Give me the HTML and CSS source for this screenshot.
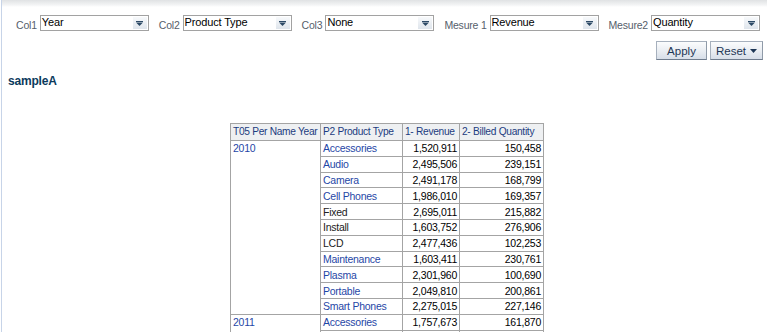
FILE: index.html
```html
<!DOCTYPE html>
<html>
<head>
<meta charset="utf-8">
<link rel="stylesheet" href="styles.css">
</head>
<body>
<div class="page">
  <div class="topbar"></div>
  <div class="prompts">
    <div class="prompt"><span class="plabel">Col1</span><div class="sel"><span class="sel-text">Year</span><span class="sel-btn"><svg width="7" height="5" viewBox="0 0 7 5"><rect x="0" y="0" width="7" height="1" fill="#2d4a66"/><path d="M0 1.5H7L3.5 5Z" fill="#2d4a66"/></svg></span></div></div>
    <div class="prompt"><span class="plabel">Col2</span><div class="sel"><span class="sel-text">Product Type</span><span class="sel-btn"><svg width="7" height="5" viewBox="0 0 7 5"><rect x="0" y="0" width="7" height="1" fill="#2d4a66"/><path d="M0 1.5H7L3.5 5Z" fill="#2d4a66"/></svg></span></div></div>
    <div class="prompt"><span class="plabel">Col3</span><div class="sel"><span class="sel-text">None</span><span class="sel-btn"><svg width="7" height="5" viewBox="0 0 7 5"><rect x="0" y="0" width="7" height="1" fill="#2d4a66"/><path d="M0 1.5H7L3.5 5Z" fill="#2d4a66"/></svg></span></div></div>
    <div class="prompt"><span class="plabel">Mesure 1</span><div class="sel"><span class="sel-text">Revenue</span><span class="sel-btn"><svg width="7" height="5" viewBox="0 0 7 5"><rect x="0" y="0" width="7" height="1" fill="#2d4a66"/><path d="M0 1.5H7L3.5 5Z" fill="#2d4a66"/></svg></span></div></div>
    <div class="prompt"><span class="plabel">Mesure2</span><div class="sel"><span class="sel-text">Quantity</span><span class="sel-btn"><svg width="7" height="5" viewBox="0 0 7 5"><rect x="0" y="0" width="7" height="1" fill="#2d4a66"/><path d="M0 1.5H7L3.5 5Z" fill="#2d4a66"/></svg></span></div></div>
  </div>
  <div class="actions">
    <button class="btn btn-apply">Apply</button>
    <button class="btn btn-reset">Reset <svg width="7" height="4" viewBox="0 0 7 4"><path d="M0 0H7L3.5 4Z" fill="#1d3655"/></svg></button>
  </div>
  <h2 class="title">sampleA</h2>
  <div class="table-wrap">
    <table class="pivot">
      <colgroup><col class="c1"><col class="c2"><col class="c3"><col class="c4"></colgroup>
      <thead>
        <tr><th>T05 Per Name Year</th><th>P2 Product Type</th><th>1- Revenue</th><th>2- Billed Quantity</th></tr>
      </thead>
      <tbody>
        <tr><td class="lnk year" rowspan="11">2010</td><td class="lnk">Accessories</td><td class="num">1,520,911</td><td class="num">150,458</td></tr>
        <tr><td class="lnk">Audio</td><td class="num">2,495,506</td><td class="num">239,151</td></tr>
        <tr><td class="lnk">Camera</td><td class="num">2,491,178</td><td class="num">168,799</td></tr>
        <tr><td class="lnk">Cell Phones</td><td class="num">1,986,010</td><td class="num">169,357</td></tr>
        <tr><td class="txt">Fixed</td><td class="num">2,695,011</td><td class="num">215,882</td></tr>
        <tr><td class="txt">Install</td><td class="num">1,603,752</td><td class="num">276,906</td></tr>
        <tr><td class="txt">LCD</td><td class="num">2,477,436</td><td class="num">102,253</td></tr>
        <tr><td class="lnk">Maintenance</td><td class="num">1,603,411</td><td class="num">230,761</td></tr>
        <tr><td class="lnk">Plasma</td><td class="num">2,301,960</td><td class="num">100,690</td></tr>
        <tr><td class="lnk">Portable</td><td class="num">2,049,810</td><td class="num">200,861</td></tr>
        <tr><td class="lnk">Smart Phones</td><td class="num">2,275,015</td><td class="num">227,146</td></tr>
        <tr><td class="lnk year" rowspan="2">2011</td><td class="lnk">Accessories</td><td class="num">1,757,673</td><td class="num">161,870</td></tr>
        <tr><td class="lnk"></td><td class="num"></td><td class="num"></td></tr>
      </tbody>
    </table>
  </div>
</div>
</body>
</html>
```

FILE: styles.css
```css
html, body {
  margin: 0;
  padding: 0;
  background: #ffffff;
  overflow: hidden;
}

body {
  font-family: "Liberation Sans", Arial, sans-serif;
  font-size: 10px;
  color: #000;
}

.page {
  margin-left: 1px;
  border-left: 1px solid #c7d4e8;
  height: 332px;
  overflow: hidden;
}

.topbar {
  height: 7px;
  background: linear-gradient(#e0e2e4, #f3f4f5 70%, #ffffff);
}

.prompts {
  display: flex;
  gap: 10px;
  padding: 8px 0 0 14px;
}

.prompt {
  display: flex;
  align-items: center;
  gap: 3px;
}

.plabel {
  color: #56606b;
  font-size: 10.5px;
  letter-spacing: -0.2px;
  padding-top: 4px;
}

.sel {
  width: 109px;
  height: 16px;
  box-sizing: border-box;
  border: 1px solid #a2a2a2;
  background: #fff;
  display: flex;
  align-items: stretch;
}

.sel-text {
  flex: 1;
  font-size: 11px;
  line-height: 13px;
  padding-left: 1px;
  letter-spacing: -0.15px;
  color: #000;
}

.sel-btn {
  width: 14px;
  margin: 1px 1px 1px 0;
  background: linear-gradient(#f7f9fb, #dfe5ec);
  display: flex;
  align-items: center;
  justify-content: center;
}

.actions {
  display: flex;
  justify-content: flex-end;
  gap: 3px;
  padding: 10px 4px 0 0;
}

.btn {
  font-family: "Liberation Sans", Arial, sans-serif;
  font-size: 11.5px;
  color: #1d3655;
  height: 19px;
  padding: 0;
  border: 1px solid #a6b0bd;
  border-bottom-color: #6f7c8d;
  border-right-color: #8f9aa8;
  background: linear-gradient(#fbfcfd, #e9edf2 55%, #d7dee8);
  display: flex;
  align-items: center;
  justify-content: center;
  gap: 4px;
}

.btn-apply {
  width: 51px;
}

.btn-reset {
  width: 53px;
}

.title {
  margin: 14px 0 0 6px;
  font-size: 12px;
  font-weight: bold;
  color: #0c3a5c;
  letter-spacing: -0.2px;
  line-height: 15px;
}

.table-wrap {
  margin-top: 34px;
  padding-left: 228px;
}

.pivot {
  border-collapse: collapse;
  table-layout: fixed;
  width: 313px;
  letter-spacing: -0.25px;
}

.c1 { width: 90px; }
.c2 { width: 82px; }
.c3 { width: 57px; }
.c4 { width: 84px; }

.pivot th,
.pivot td {
  border: 1px solid #a4a4a4;
  padding: 0 2px;
  white-space: nowrap;
  overflow: hidden;
  font-size: 10.5px;
}

.pivot th {
  background: #eef0f2;
  color: #1c3c80;
  font-weight: normal;
  text-align: left;
  height: 16px;
  line-height: 16px;
  font-size: 10.2px;
  letter-spacing: -0.3px;
}

.pivot td {
  height: 14.8px;
  line-height: 14px;
}

.pivot td.lnk {
  color: #1f47a6;
}

.pivot td.txt {
  color: #222;
}

.pivot td.year {
  vertical-align: top;
}

.pivot td.num {
  text-align: right;
  color: #000;
}
```
